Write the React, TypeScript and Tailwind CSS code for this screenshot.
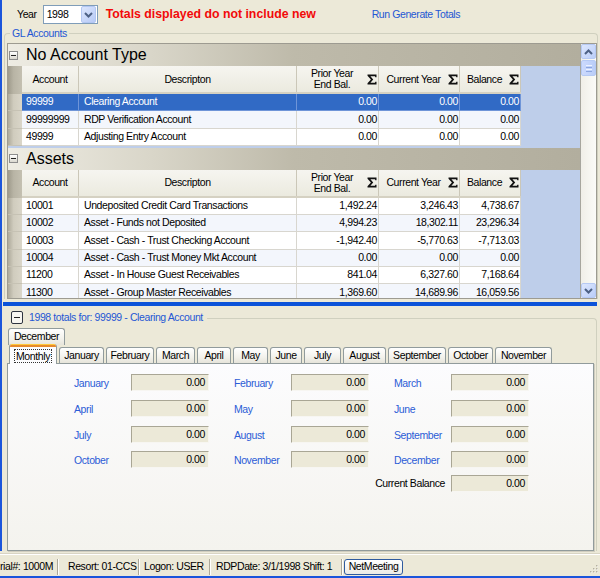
import React from "react";

type Row = { acct: string; desc: string; prior: string; cur: string; bal: string };

const noAccountRows: Row[] = [
  { acct: "99999", desc: "Clearing Account", prior: "0.00", cur: "0.00", bal: "0.00" },
  { acct: "99999999", desc: "RDP Verification Account", prior: "0.00", cur: "0.00", bal: "0.00" },
  { acct: "49999", desc: "Adjusting Entry Account", prior: "0.00", cur: "0.00", bal: "0.00" },
];

const assetRows: Row[] = [
  { acct: "10001", desc: "Undeposited Credit Card Transactions", prior: "1,492.24", cur: "3,246.43", bal: "4,738.67" },
  { acct: "10002", desc: "Asset - Funds not Deposited", prior: "4,994.23", cur: "18,302.11", bal: "23,296.34" },
  { acct: "10003", desc: "Asset - Cash - Trust Checking Account", prior: "-1,942.40", cur: "-5,770.63", bal: "-7,713.03" },
  { acct: "10004", desc: "Asset - Cash - Trust Money Mkt Account", prior: "0.00", cur: "0.00", bal: "0.00" },
  { acct: "11200", desc: "Asset - In House Guest Receivables", prior: "841.04", cur: "6,327.60", bal: "7,168.64" },
  { acct: "11300", desc: "Asset - Group Master Receivables", prior: "1,369.60", cur: "14,689.96", bal: "16,059.56" },
];

const tabs = [
  { label: "January", w: "w-[45px]" },
  { label: "February", w: "w-[48px]" },
  { label: "March", w: "w-[39px]" },
  { label: "April", w: "w-[34px]" },
  { label: "May", w: "w-[35px]" },
  { label: "June", w: "w-[32px]" },
  { label: "July", w: "w-[37px]" },
  { label: "August", w: "w-[43px]" },
  { label: "September", w: "w-[58px]" },
  { label: "October", w: "w-[45px]" },
  { label: "November", w: "w-[57px]" },
];

const months = [
  ["January", "February", "March"],
  ["April", "May", "June"],
  ["July", "August", "September"],
  ["October", "November", "December"],
];
const rowGaps = ["", "mt-[9px]", "mt-[9px]", "mt-[8px]"];

const Sigma = () => (
  <svg width="10" height="11" viewBox="0 0 10 11" className="shrink-0">
    <path
      d="M0.5 0.5H9.5V3.2H8.3L8 2.2H3.4L6.2 5.5L3.4 8.8H8L8.3 7.8H9.5V10.5H0.5V9.3L3.9 5.5L0.5 1.7Z"
      fill="#111"
    />
  </svg>
);

const MinusBox = () => (
  <div className="flex h-[9px] w-[9px] shrink-0 items-center justify-center border border-[#8D8D8D] bg-[linear-gradient(180deg,#FFFFFF,#DAD8CF)]">
    <div className="h-[1px] w-[5px] bg-[#222]" />
  </div>
);

const Chevron = ({ up }: { up?: boolean }) => (
  <svg width="9" height="6" viewBox="0 0 9 6">
    <path d={up ? "M1 5L4.5 1.5L8 5" : "M1 1L4.5 4.5L8 1"} fill="none" stroke="#4D6185" strokeWidth="2" />
  </svg>
);

const ScrollBtn = ({ up }: { up?: boolean }) => (
  <div className="flex h-[15px] w-[15px] items-center justify-center rounded-[2px] border border-[#B6C9F3] bg-[linear-gradient(135deg,#DDE7FE,#BACDF8)]">
    <Chevron up={up} />
  </div>
);

const HeaderCell = ({ w, sigma, children }: { w: string; sigma?: boolean; children: React.ReactNode }) => (
  <div className={`flex h-full items-center border-r border-[#CBC7B8] ${w}`}>
    <div className="flex-1 text-center leading-[11px]">{children}</div>
    {sigma && (
      <div className="pr-[1px]">
        <Sigma />
      </div>
    )}
  </div>
);

const DataRow = ({ r, i, sel }: { r: Row; i: number; sel?: boolean }) => {
  const base = sel ? "bg-[#316AC5] text-white" : i % 2 === 1 ? "bg-[#F3F6FC] text-black" : "bg-white text-black";
  const line = sel ? "border-[#6F95D8]" : "border-[#D8D6CF]";
  return (
    <div className={`flex h-[17.3px] whitespace-nowrap border-b ${line} ${base}`}>
      <div className={`flex w-[57px] items-center overflow-hidden border-r pl-[4px] ${line}`}>{r.acct}</div>
      <div className={`flex w-[218px] items-center overflow-hidden border-r pl-[5px] ${line}`}>{r.desc}</div>
      <div className={`flex w-[82px] items-center justify-end border-r pr-[1px] ${line}`}>{r.prior}</div>
      <div className={`flex w-[81px] items-center justify-end border-r pr-[1px] ${line}`}>{r.cur}</div>
      <div className={`flex w-[61px] items-center justify-end border-r pr-[1px] ${line}`}>{r.bal}</div>
    </div>
  );
};

const Section = ({ title, rows, selected, last }: { title: string; rows: Row[]; selected?: number; last?: boolean }) => (
  <div>
    <div className="flex h-[22px] items-center bg-[linear-gradient(90deg,#EEECE3_0%,#D9D6C9_25%,#BEBAAA_50%,#B2AE9E_100%)] pl-[1px]">
      <MinusBox />
      <span className="ml-[8px] text-[16px] leading-none tracking-normal text-black">{title}</span>
    </div>
    <div className={`flex ${last ? "" : "pb-[2px]"} bg-[#BECEEA]`}>
      <div className="flex w-[14px] flex-col">
        <div className="h-[28px] bg-[linear-gradient(90deg,#9E9A8B,#B8B4A5_40%,#C4C0B1)]" />
        {rows.map((r) => (
          <div
            key={r.acct}
            className="h-[17.3px] border-b border-[#C6C2B4] bg-[linear-gradient(90deg,#AEAA9B,#D0CCBE_40%,#DAD6C9)]"
          />
        ))}
      </div>
      <div className="w-[499px]">
        <div className="flex h-[28px] border-b-[2px] border-[#D5D1C2] bg-[linear-gradient(180deg,#F6F5F0,#EBEADF)]">
          <HeaderCell w="w-[57px]">Account</HeaderCell>
          <HeaderCell w="w-[218px]">Descripton</HeaderCell>
          <HeaderCell w="w-[82px]" sigma>
            Prior Year
            <br />
            End Bal.
          </HeaderCell>
          <HeaderCell w="w-[81px]" sigma>
            Current Year
          </HeaderCell>
          <HeaderCell w="w-[61px]" sigma>
            Balance
          </HeaderCell>
        </div>
        {rows.map((r, i) => (
          <DataRow key={r.acct} r={r} i={i} sel={selected === i} />
        ))}
      </div>
      <div className="flex-1" />
    </div>
  </div>
);

const Field = () => (
  <div className="flex h-[17px] w-[78px] items-center justify-end border border-t-[#A9A695] border-l-[#A9A695] border-r-[#F7F6F2] border-b-[#F7F6F2] bg-[#ECE9D8] pr-[3px]">
    0.00
  </div>
);

const Sep = () => <div className="h-[16px] w-[2px] border-x border-l-[#ACA899] border-r-white" />;

const Grip = () => (
  <svg width="10" height="10" viewBox="0 0 10 10">
    {[
      [8, 0],
      [5, 3],
      [8, 3],
      [2, 6],
      [5, 6],
      [8, 6],
    ].map(([x, y]) => (
      <g key={`${x}-${y}`}>
        <rect x={x + 0.5} y={y + 0.5} width="1.5" height="1.5" fill="#fff" />
        <rect x={x} y={y} width="1.5" height="1.5" fill="#B5B19F" />
      </g>
    ))}
  </svg>
);

export default function App() {
  return (
    <div className="flex h-[578px] w-[600px] flex-col overflow-hidden bg-[#ECE9D8] font-['Liberation_Sans',Arial,sans-serif] text-[10.5px] tracking-[-0.4px] text-black">
      <div className="flex h-[551px]">
        <div className="w-[2px] bg-[#1B55DB]" />
        <div className="flex w-[598px] flex-col">
          {/* top bar */}
          <div className="flex h-[27px] items-start pl-[15px] pt-[5px]">
            <div className="flex h-[19px] items-center">
              <span>Year</span>
              <div className="ml-[6px] flex h-[19px] w-[55px] items-center border border-[#7F9DB9] bg-white">
                <span className="flex-1 pl-[3px]">1998</span>
                <div className="mr-[1px] flex h-[17px] w-[15px] items-center justify-center rounded-[2px] border border-[#B3C7F2] bg-[linear-gradient(135deg,#DCE6FD,#B7CAF6)]">
                  <Chevron />
                </div>
              </div>
              <div className="ml-[8px] w-[266px] whitespace-nowrap text-[12.3px] font-bold tracking-normal text-[#F20A0A]">
                Totals displayed do not include new
              </div>
              <span className="text-[#2457D4]">Run Generate Totals</span>
            </div>
          </div>

          {/* GL accounts group */}
          <fieldset className="ml-[2px] w-[594px] rounded-t-[4px] border border-b-0 border-[#D0D0BF] pl-[2px] pt-[3px]">
            <legend className="ml-[3px] px-[2px] leading-[13px] text-[#2457D4]">GL Accounts</legend>
            <div className="flex h-[256px] w-[590px] border border-[#9D9B91] bg-white">
              <div className="w-[573px] overflow-hidden border-r border-[#A7A69E]">
                <Section title="No Account Type" rows={noAccountRows} selected={0} />
                <Section title="Assets" rows={assetRows} last />
              </div>
              <div className="flex w-[15px] flex-col bg-[linear-gradient(90deg,#F0EFE8,#FBFBF8)]">
                <ScrollBtn up />
                <div className="mt-[1px] flex h-[16px] w-[15px] flex-col items-center justify-center gap-[1px] rounded-[2px] border border-[#B6CAF4] bg-[linear-gradient(90deg,#CCDAFD,#BACDF8)]">
                  <div className="h-[1px] w-[6px] bg-[#EEF3FF]" />
                  <div className="h-[1px] w-[6px] bg-[#8CA6E0]" />
                  <div className="h-[1px] w-[6px] bg-[#EEF3FF]" />
                  <div className="h-[1px] w-[6px] bg-[#8CA6E0]" />
                </div>
                <div className="flex-1" />
                <ScrollBtn />
              </div>
            </div>
          </fieldset>

          {/* splitter */}
          <div className="ml-[1px] mt-[3px] h-[4px] w-[594px] bg-[#0B53D9]" />

          {/* totals group */}
          <div className="ml-[1px] flex w-[594px] flex-1 flex-col">
            <div className="mt-[3px] flex h-[17px] items-center">
              <div className="ml-[8px] flex h-[13px] w-[12px] items-center justify-center rounded-[2px] border border-[#2E3440] bg-[#F7F6F1]">
                <div className="h-[1.5px] w-[6px] bg-[#222]" />
              </div>
              <span className="ml-[6px] whitespace-nowrap text-[#2457D4]">1998 totals for: 99999 - Clearing Account</span>
              <div className="ml-[4px] mt-[9px] h-[8px] flex-1 self-start rounded-tr-[4px] border-r border-t border-[#D0D0BF]" />
            </div>
            <div className="flex flex-1 flex-col border-r border-[#D0D0BF] pl-[4px] pr-[2px]">
              <div className="mt-[2px] flex h-[17px]">
                <div className="ml-[1px] flex h-[17px] w-[57px] items-center justify-center rounded-t-[3px] border border-b-0 border-[#919B9C] bg-[linear-gradient(180deg,#FFFFFF,#F3F2EC_60%,#E6E4DA)]">
                  December
                </div>
              </div>
              <div className="flex h-[18px] items-end gap-[2px]">
                <div className="relative z-10 -mb-[1px] ml-[2px] flex h-[20px] w-[48px] flex-col overflow-hidden rounded-t-[3px] border-x border-[#919B9C] bg-[#FCFCFE]">
                  <div className="h-[1px] bg-[#FFC83C]" />
                  <div className="h-[2px] bg-[#E68B2C]" />
                  <div className="flex flex-1 items-center justify-center">
                    <span className="border border-dotted border-[#333] px-[1px] leading-[12px]">Monthly</span>
                  </div>
                </div>
                {tabs.map((t) => (
                  <div
                    key={t.label}
                    className={`flex h-[16px] items-center justify-center rounded-t-[3px] border border-b-0 border-[#919B9C] bg-[linear-gradient(180deg,#FFFFFF,#F3F2EC_60%,#E6E4DA)] ${t.w}`}
                  >
                    {t.label}
                  </div>
                ))}
              </div>
              <div className="flex flex-1 flex-col border border-[#919B9C] bg-[linear-gradient(180deg,#FCFCFE,#F4F3EE)] pl-[66px] pt-[10px] shadow-[1px_1px_0_#D0CDBF]">
                {months.map((row, ri) => (
                  <div key={ri} className={`flex h-[17px] items-center ${rowGaps[ri]}`}>
                    {row.map((m) => (
                      <React.Fragment key={m}>
                        <div className="w-[57px] pt-[2px] text-[#2B5CD6]">{m}</div>
                        <Field />
                        <div className="w-[25px]" />
                      </React.Fragment>
                    ))}
                  </div>
                ))}
                <div className="mt-[7px] flex h-[17px] items-center">
                  <div className="w-[377px] pr-[6px] text-right">Current Balance</div>
                  <Field />
                </div>
              </div>
            </div>
          </div>
        </div>
      </div>

      {/* status bar */}
      <div className="mt-[2px] flex h-[23px] items-start border-t border-t-[#D8D4C4] pt-[4px] shadow-[inset_0_1px_0_#FFFFFF]">
        <div className="flex h-[18px] flex-1 items-center whitespace-nowrap">
          <div className="w-[57px]">rial#: 1000M</div>
          <Sep />
          <div className="w-[79px] pl-[9px]">Resort: 01-CCS</div>
          <Sep />
          <div className="w-[69px] pl-[4px]">Logon: USER</div>
          <Sep />
          <div className="w-[130px] pl-[5px]">RDPDate: 3/1/1998 Shift: 1</div>
          <Sep />
          <div className="ml-[1px] flex h-[16px] w-[59px] items-center justify-center rounded-[3px] border border-[#2F5B9F] bg-[linear-gradient(180deg,#FFFFFF,#ECEBE6)]">
            NetMeeting
          </div>
          <div className="flex-1" />
          <div className="mr-[2px] self-end pb-[1px]">
            <Grip />
          </div>
        </div>
      </div>
      <div className="h-[2px] bg-[#1B55DB]" />
    </div>
  );
}
